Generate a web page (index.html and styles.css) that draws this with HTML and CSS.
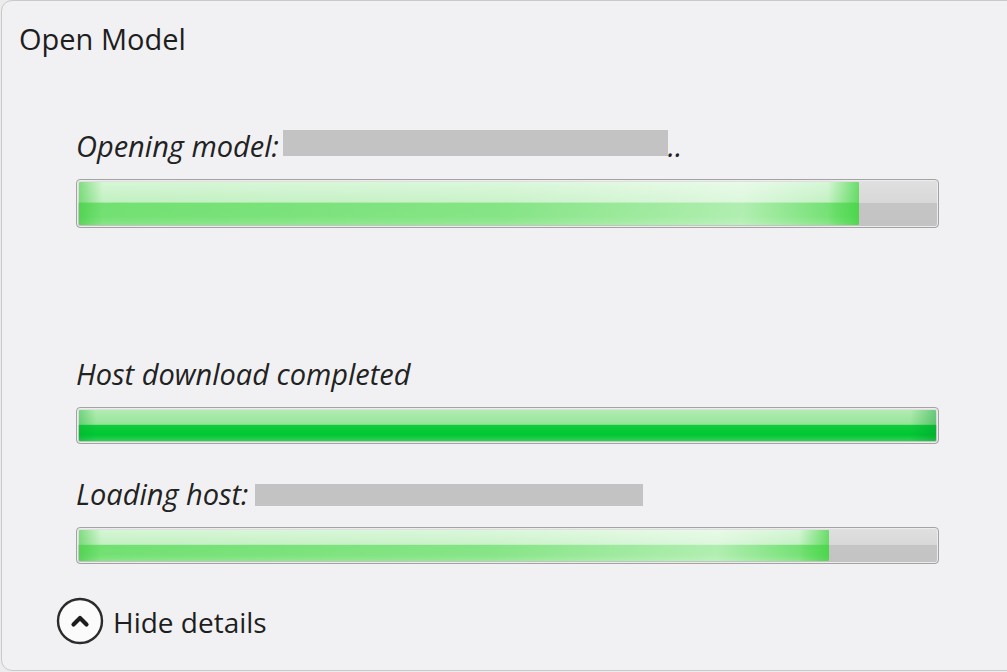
FILE: index.html
```html
<!DOCTYPE html>
<html>
<head>
<meta charset="utf-8">
<link rel="stylesheet" href="styles.css">
</head>
<body>
<div class="window">
  <div class="title">Open Model</div>
  <div class="content">
    <div class="label">Opening model:<span class="redact r1"></span>..</div>
    <div class="bar big"><div class="fill glow" style="width: 91%"></div></div>
    <div class="label l2">Host download completed</div>
    <div class="bar"><div class="fill done" style="width: 100%"></div></div>
    <div class="label l3">Loading host: <span class="redact r2"></span></div>
    <div class="bar"><div class="fill glow" style="width: 87.5%"></div></div>
  </div>
  <div class="details">
    <svg class="chev" width="48" height="48" viewBox="0 0 48 48">
      <circle cx="24" cy="24" r="22" fill="#fbfbfb" stroke="#2b2b2b" stroke-width="2.4"/>
      <path d="M17.5 27.5 L24 21 L30.5 27.5" fill="none" stroke="#1e1e1e" stroke-width="4.2" stroke-linecap="round" stroke-linejoin="round"/>
    </svg>
    <span class="dtext">Hide details</span>
  </div>
</div>
</body>
</html>
```
FILE: styles.css
```css
html, body {
  margin: 0;
  padding: 0;
  width: 1007px;
  height: 672px;
  overflow: hidden;
  background: #ececec;
}
.window {
  box-sizing: border-box;
  width: 1030px;
  height: 671px;
  margin-left: 1px;
  border: 1px solid #c9c9cc;
  border-radius: 11px;
  background: #f1f1f3;
  font-family: "Open Sans", "Noto Sans", sans-serif;
  color: #1e1e1e;
  padding: 20px 0 0 17px;
}
.title {
  font-size: 29px;
  line-height: 36px;
  height: 36px;
}
.content {
  padding: 71px 0 0 57px;
  width: 863px;
}
.label {
  font-style: italic;
  font-size: 29px;
  line-height: 36px;
  height: 36px;
  color: #222;
  display: flex;
  align-items: flex-start;
  white-space: nowrap;
}
.l2 { margin-top: 128px; }
.l3 { margin-top: 32px; }
.redact {
  display: inline-block;
  background: #c3c3c3;
  height: 26px;
}
.r1 { width: 385px; margin-top: 2px; margin-left: 4px; }
.r2 { width: 388px; height: 22px; margin-top: 8px; margin-left: 7px; }
.bar {
  box-sizing: border-box;
  margin-top: 15px;
  height: 37px;
  border: 1px solid #a3a3a3;
  border-radius: 4px;
  background: linear-gradient(to bottom, #e0e0e0 0%, #d8d8d8 48%, #c5c5c5 50%, #c3c3c3 100%);
  box-shadow: inset 0 0 0 1px #ececec;
  padding: 2px;
  overflow: hidden;
}
.bar.big { height: 49px; margin-top: 15px; }
.fill {
  height: 100%;
  border-radius: 1px;
}
.glow {
  background:
    linear-gradient(to right, rgba(255,255,255,0) 0%, rgba(255,255,255,0.15) 55%, rgba(255,255,255,0.45) 85%, rgba(255,255,255,0) 97%),
    linear-gradient(to right, rgba(60,200,60,0.55) 0%, rgba(60,200,60,0) 3%, rgba(60,200,60,0) 96%, rgba(60,210,60,0.7) 100%),
    linear-gradient(to bottom, #d5f6d5 0%, #c2f0c2 46%, #70e070 50%, #72e072 80%, #86e686 100%);
}
.done {
  background:
    linear-gradient(to right, rgba(0,170,40,0.35) 0%, rgba(0,170,40,0) 2%, rgba(0,170,40,0) 97%, rgba(0,150,40,0.4) 100%),
    linear-gradient(to bottom, #b2ecb2 0%, #96e49a 46%, #10cc3c 50%, #00c634 80%, #2ed254 100%);
}
.details {
  display: flex;
  align-items: center;
  margin-top: 33px;
  margin-left: 37px;
  height: 48px;
}
.chev { display: block; }
.dtext {
  font-size: 28px;
  line-height: 36px;
  margin-left: 9px;
  margin-top: 2px;
  color: #1e1e1e;
}
```
